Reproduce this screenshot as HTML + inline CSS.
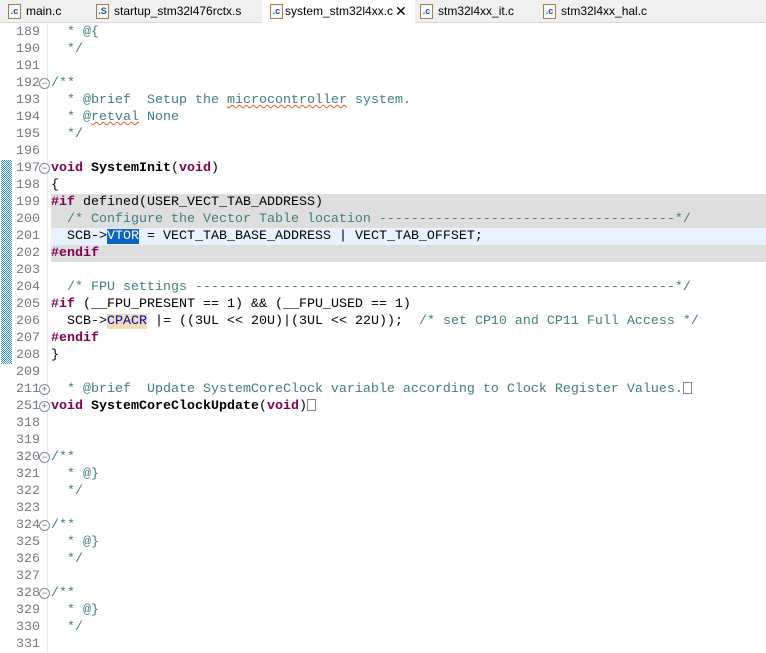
<!DOCTYPE html>
<html><head><meta charset="utf-8"><style>
body{margin:0;width:766px;height:652px;background:#fff;overflow:hidden;position:relative;font-family:"Liberation Sans",sans-serif}
.tabs{position:absolute;left:0;top:0;width:766px;height:22px;background:#f0f0f0;border-bottom:1px solid #d9d9d9}
.tab{position:absolute;top:0;height:22px;font-size:12px;line-height:22px;color:#000}
.ic{position:absolute;top:4px;width:11px;height:13px;border:1px solid #a0804a;background:#fafafa;font-size:9px;line-height:13px;color:#2050a0;text-align:center;font-weight:bold}
.act{background:#fff;height:23px}
.row{position:absolute;left:0;width:766px;height:17px;font-family:"Liberation Mono",monospace;font-size:13.33px;line-height:17px;white-space:pre}
.ln{position:absolute;left:0;width:40px;text-align:right;color:#787878}
.cd{position:absolute;left:51px;right:0;height:17px}
.c{color:#3f7f7f}.k{color:#7f0055;font-weight:bold}.f{color:#0000c0}
.gut{position:absolute;left:47px;top:23px;width:1px;height:629px;background:#e8e8e8}
.mark{position:absolute;left:1px;width:11px;background:repeating-conic-gradient(#2f8fd0 0 25%,#fff 0 50%) 0 0/2px 2px}
.fold{position:absolute;left:39px;top:3px;width:9px;height:9px;border:1px solid #8090a0;border-radius:50%;background:#fff;font-size:9px;line-height:9px;text-align:center;color:#506070;font-family:"Liberation Sans",sans-serif}
.sq{display:inline-block;width:7px;height:10px;border:1px solid #888;vertical-align:-2px}
.u{text-decoration:underline wavy #e06020;text-decoration-thickness:1px}
</style></head><body>
<div class="tabs">
<div class="tab" style="left:8px"><span class="ic" style="left:0">.c</span><span style="margin-left:18px">main.c</span></div>
<div class="tab" style="left:96px"><span class="ic" style="left:0">.S</span><span style="margin-left:18px">startup_stm32l476rctx.s</span></div>
<div class="tab act" style="left:262px;width:153px"><span class="ic" style="left:8px">.c</span><span style="margin-left:23px">system_stm32l4xx.c</span><span style="position:absolute;left:133px;top:0;font-size:14px">✕</span></div>
<div class="tab" style="left:420px"><span class="ic" style="left:0">.c</span><span style="margin-left:18px">stm32l4xx_it.c</span></div>
<div class="tab" style="left:543px"><span class="ic" style="left:0">.c</span><span style="margin-left:18px">stm32l4xx_hal.c</span></div>
</div>
<div class="gut"></div>
<div class="mark" style="top:160px;height:204px"></div>
<div style="position:absolute;left:51px;right:0;top:194px;height:68px;background:#dedede"></div>
<div style="position:absolute;left:51px;right:0;top:228px;height:17px;background:#e8f2fe"></div>

<div class="row" style="top:24px"><span class="ln">189</span><span class="cd"><span class="c">  * @{</span></span></div>
<div class="row" style="top:41px"><span class="ln">190</span><span class="cd"><span class="c">  */</span></span></div>
<div class="row" style="top:58px"><span class="ln">191</span></div>
<div class="row" style="top:75px"><span class="ln">192</span><span class="fold">−</span><span class="cd"><span class="c">/**</span></span></div>
<div class="row" style="top:92px"><span class="ln">193</span><span class="cd"><span class="c">  * @brief  Setup the <span class="u">microcontroller</span> system.</span></span></div>
<div class="row" style="top:109px"><span class="ln">194</span><span class="cd"><span class="c">  * @<span class="u">retval</span> None</span></span></div>
<div class="row" style="top:126px"><span class="ln">195</span><span class="cd"><span class="c">  */</span></span></div>
<div class="row" style="top:143px"><span class="ln">196</span></div>
<div class="row" style="top:160px"><span class="ln">197</span><span class="fold">−</span><span class="cd"><span class="k">void</span> <b>SystemInit</b>(<span class="k">void</span>)</span></div>
<div class="row" style="top:177px"><span class="ln">198</span><span class="cd">{</span></div>
<div class="row" style="top:194px"><span class="ln">199</span><span class="cd"><span class="k">#if</span> defined(USER_VECT_TAB_ADDRESS)</span></div>
<div class="row" style="top:211px"><span class="ln">200</span><span class="cd"><span class="c">  /* Configure the Vector Table location -------------------------------------*/</span></span></div>
<div class="row" style="top:228px"><span class="ln">201</span><span class="cd">  SCB-&gt;<span style="background:#0a64c0;color:#fff">VTOR</span> = VECT_TAB_BASE_ADDRESS | VECT_TAB_OFFSET;</span></div>
<div class="row" style="top:245px"><span class="ln">202</span><span class="cd"><span class="k">#endif</span></span></div>
<div class="row" style="top:262px"><span class="ln">203</span></div>
<div class="row" style="top:279px"><span class="ln">204</span><span class="cd"><span class="c">  /* FPU settings ------------------------------------------------------------*/</span></span></div>
<div class="row" style="top:296px"><span class="ln">205</span><span class="cd"><span class="k">#if</span> (__FPU_PRESENT == 1) &amp;&amp; (__FPU_USED == 1)</span></div>
<div class="row" style="top:313px"><span class="ln">206</span><span class="cd">  SCB-&gt;<span class="f" style="background:#f2dcb4">CPACR</span> |= ((3UL &lt;&lt; 20U)|(3UL &lt;&lt; 22U));  <span class="c">/* set CP10 and CP11 Full Access */</span></span></div>
<div class="row" style="top:330px"><span class="ln">207</span><span class="cd"><span class="k">#endif</span></span></div>
<div class="row" style="top:347px"><span class="ln">208</span><span class="cd">}</span></div>
<div class="row" style="top:364px"><span class="ln">209</span></div>
<div class="row" style="top:381px"><span class="ln">211</span><span class="fold">+</span><span class="cd"><span class="c">  * @brief  Update SystemCoreClock variable according to Clock Register Values.</span><span class="sq"></span></span></div>
<div class="row" style="top:398px"><span class="ln">251</span><span class="fold">+</span><span class="cd"><span class="k">void</span> <b>SystemCoreClockUpdate</b>(<span class="k">void</span>)<span class="sq"></span></span></div>
<div class="row" style="top:415px"><span class="ln">318</span></div>
<div class="row" style="top:432px"><span class="ln">319</span></div>
<div class="row" style="top:449px"><span class="ln">320</span><span class="fold">−</span><span class="cd"><span class="c">/**</span></span></div>
<div class="row" style="top:466px"><span class="ln">321</span><span class="cd"><span class="c">  * @}</span></span></div>
<div class="row" style="top:483px"><span class="ln">322</span><span class="cd"><span class="c">  */</span></span></div>
<div class="row" style="top:500px"><span class="ln">323</span></div>
<div class="row" style="top:517px"><span class="ln">324</span><span class="fold">−</span><span class="cd"><span class="c">/**</span></span></div>
<div class="row" style="top:534px"><span class="ln">325</span><span class="cd"><span class="c">  * @}</span></span></div>
<div class="row" style="top:551px"><span class="ln">326</span><span class="cd"><span class="c">  */</span></span></div>
<div class="row" style="top:568px"><span class="ln">327</span></div>
<div class="row" style="top:585px"><span class="ln">328</span><span class="fold">−</span><span class="cd"><span class="c">/**</span></span></div>
<div class="row" style="top:602px"><span class="ln">329</span><span class="cd"><span class="c">  * @}</span></span></div>
<div class="row" style="top:619px"><span class="ln">330</span><span class="cd"><span class="c">  */</span></span></div>
<div class="row" style="top:636px"><span class="ln">331</span></div>
</body></html>
